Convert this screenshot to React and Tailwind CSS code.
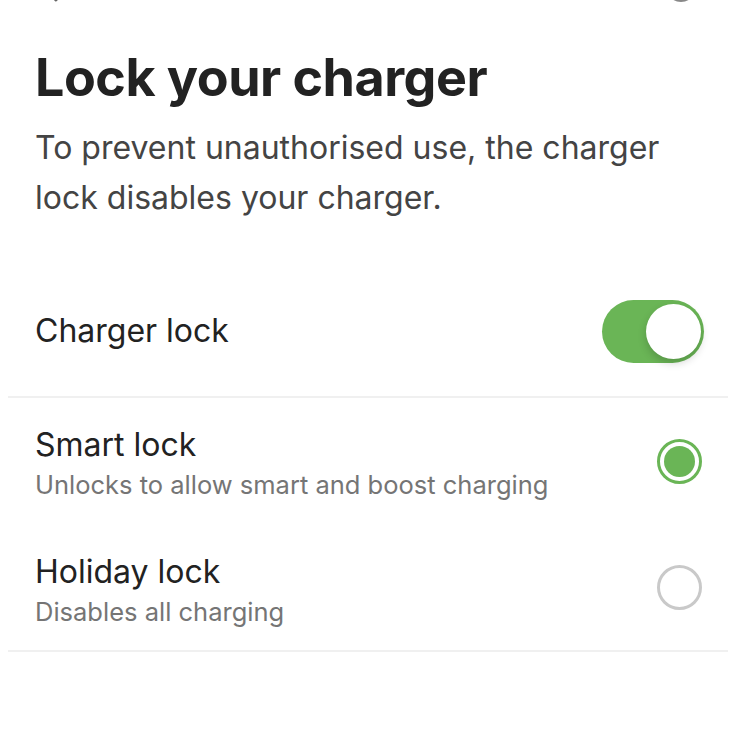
import React, { useState } from 'react';

// Radio circle used by the lock mode rows
const Radio = ({ checked }) => (
  <span
    className={`flex items-center justify-center w-[45px] h-[45px] rounded-full border-[3px] ${
      checked ? 'border-[#6ab556]' : 'border-[#c9c9c9]'
    }`}
  >
    {checked && <span className="w-[31px] h-[31px] rounded-full bg-[#6ab556]" />}
  </span>
);

const Toggle = ({ on, onChange }) => (
  <button
    onClick={onChange}
    className={`relative w-[102px] h-[63px] rounded-full transition-colors ${on ? 'bg-[#6ab556]' : 'bg-[#e5e5e5]'}`}
  >
    <span
      className={`absolute top-[4px] w-[55px] h-[55px] rounded-full bg-white shadow-[0_4px_8px_rgba(0,0,0,0.18)] transition-all ${
        on ? 'left-[44px]' : 'left-[4px]'
      }`}
    />
  </button>
);

const modes = [
  { id: 'smart', title: 'Smart lock', sub: 'Unlocks to allow smart and boost charging' },
  { id: 'holiday', title: 'Holiday lock', sub: 'Disables all charging' },
];

export default function App() {
  const [locked, setLocked] = useState(true);
  const [mode, setMode] = useState('smart');

  return (
    <div className="w-[736px] h-[744px] bg-white overflow-hidden text-[#222]" style={{ fontFamily: 'Inter, "Noto Sans", sans-serif' }}>
      {/* header, scrolled mostly out of view */}
      <div className="-mt-[42px] h-[44px] flex items-end justify-between px-[38px] pr-[40px]">
        <svg width="24" height="30" viewBox="0 0 24 30" fill="none" stroke="#666" strokeWidth="3" strokeLinecap="round">
          <path d="M18 2 L6 15 L18 28" />
        </svg>
        <span className="w-[30px] h-[30px] rounded-full border-[3px] border-[#888]" />
      </div>

      <div className="px-[35px]">
        <h1 className="mt-[45px] text-[52px] leading-[62px] font-bold tracking-[-0.5px]">Lock your charger</h1>
        <p className="mt-[14px] text-[32px] leading-[50px] text-[#444]">
          To prevent unauthorised use, the charger lock disables your charger.
        </p>
      </div>

      <div className="mt-[43px] h-[130px] flex items-center justify-between pl-[35px] pr-[32px]">
        <span className="text-[32px] leading-[38px]">Charger lock</span>
        <Toggle on={locked} onChange={() => setLocked(!locked)} />
      </div>
      <div className="mx-2 h-[2px] bg-[#f0f0f0]" />

      <div className="flex flex-col">
        {modes.map((m, i) => (
          <button
            key={m.id}
            onClick={() => setMode(m.id)}
            className={`w-full flex items-center justify-between pl-[35px] pr-[34px] text-left ${i === 0 ? 'h-[127px]' : 'h-[125px]'}`}
          >
            <div className="self-start pt-[28px]">
              <div className="text-[32px] leading-[38px] text-[#222]">{m.title}</div>
              <div className="text-[25.5px] leading-[42px] text-[#757575]">{m.sub}</div>
            </div>
            <Radio checked={mode === m.id} />
          </button>
        ))}
      </div>
      <div className="mx-2 h-[2px] bg-[#f0f0f0]" />
    </div>
  );
}
